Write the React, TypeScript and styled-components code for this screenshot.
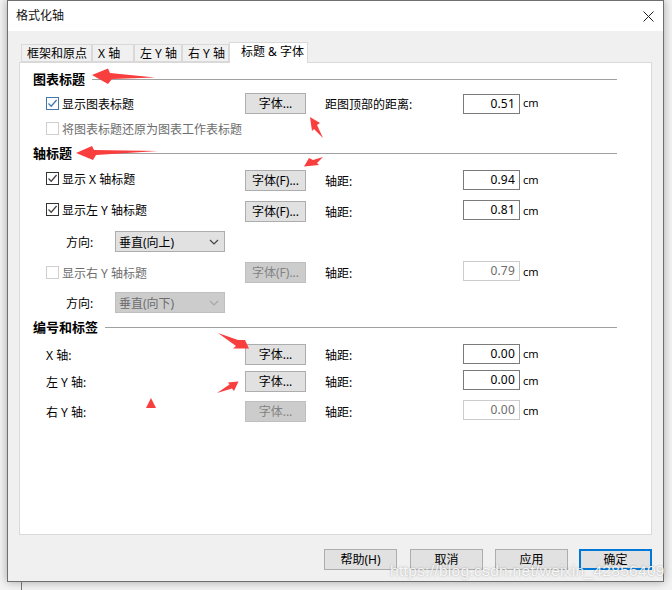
import React from "react";
import styled, { createGlobalStyle } from "styled-components";

const GlobalStyle = createGlobalStyle`
  html, body {
    margin: 0;
    padding: 0;
    background: #f3f3f3;
  }
  * {
    box-sizing: border-box;
  }
`;

const FONT = `"Noto Sans", "Noto Sans CJK SC", sans-serif`;

const Page = styled.div`
  position: relative;
  width: 672px;
  height: 590px;
  overflow: hidden;
  padding-left: 7px;
  font-family: ${FONT};
  font-size: 12px;
  color: #000;
`;

const Dialog = styled.div`
  width: 657px;
  height: 582px;
  border: 1px solid #6f6f6f;
  background: #f0f0f0;
  box-shadow: 0 0 9px rgba(0, 0, 0, 0.32);
`;

const BackEdge = styled.div`
  margin-left: 14px;
  height: 8px;
  border-left: 1px solid #707070;
`;

const TitleBar = styled.div`
  display: flex;
  align-items: center;
  justify-content: space-between;
  height: 30px;
  padding: 0 9px 0 8px;
  background: #fff;
`;

const Title = styled.span`
  line-height: 30px;
  color: #111;
`;

const Body = styled.div`
  padding: 11px 0 0 11px;
`;

const TabStrip = styled.div`
  display: flex;
  align-items: flex-end;
  height: 20px;
  padding-left: 2px;
`;

const Tab = styled.div<{ $width: number; $active?: boolean }>`
  position: relative;
  width: ${(p) => p.$width}px;
  height: ${(p) => (p.$active ? 21 : 18)}px;
  margin-bottom: ${(p) => (p.$active ? -1 : 0)}px;
  padding-left: ${(p) => (p.$active ? 11 : 5)}px;
  border: 1px solid #d9d9d9;
  border-bottom: ${(p) => (p.$active ? "none" : "1px solid #d9d9d9")};
  background: ${(p) => (p.$active ? "#fff" : "#f0f0f0")};
  line-height: 17px;
  white-space: nowrap;
  z-index: ${(p) => (p.$active ? 1 : 0)};
`;

const Panel = styled.div`
  width: 633px;
  height: 473px;
  padding: 7px 0 0 13px;
  border: 1px solid #d9d9d9;
  background: #fff;
`;

const Heading = styled.div<{ $top?: number }>`
  display: flex;
  align-items: center;
  gap: 7px;
  width: 584px;
  height: 18px;
  margin-top: ${(p) => p.$top ?? 0}px;
  font-size: 13px;
  font-weight: 700;
  line-height: 16px;
  white-space: nowrap;
`;

const HeadingLine = styled.div`
  flex: 1;
  height: 1px;
  margin-top: 1px;
  background: #a0a0a0;
`;

const Row = styled.div<{ $top: number }>`
  display: grid;
  grid-template-columns: 212px 61px 19px 138px 57px 3px auto;
  grid-template-rows: 21px;
  align-items: center;
  height: 21px;
  margin-top: ${(p) => p.$top}px;
  white-space: nowrap;
`;

const LeftCell = styled.div<{ $indent: number; $raise?: number }>`
  display: flex;
  align-items: center;
  padding-left: ${(p) => p.$indent}px;
  margin-bottom: ${(p) => p.$raise ?? 0}px;
`;

const Box = styled.span<{ $tone: "blue" | "dark" | "off" }>`
  display: flex;
  align-items: center;
  justify-content: center;
  width: 13px;
  height: 13px;
  margin-right: 3px;
  background: #fff;
  border: 1px solid
    ${(p) => (p.$tone === "blue" ? "#3f78ad" : p.$tone === "dark" ? "#333" : "#cfcfcf")};
  color: ${(p) => (p.$tone === "blue" ? "#3f78ad" : "#444")};
`;

const CheckText = styled.span<{ $off?: boolean }>`
  color: ${(p) => (p.$off ? "#6d6d6d" : "#000")};
`;

const FontButton = styled.button<{ $off?: boolean }>`
  grid-column: 2;
  width: 61px;
  height: 21px;
  padding: 0;
  border: 1px solid ${(p) => (p.$off ? "#bfbfbf" : "#adadad")};
  background: ${(p) => (p.$off ? "#cccccc" : "#e1e1e1")};
  color: ${(p) => (p.$off ? "#838383" : "#000")};
  font: inherit;
  line-height: 19px;
`;

const FieldLabel = styled.span`
  grid-column: 4;
`;

const Field = styled.input<{ $shift?: number }>`
  grid-column: 5;
  align-self: start;
  width: 57px;
  height: 20px;
  margin-top: ${(p) => p.$shift ?? 0}px;
  padding: 0 4px 1px 0;
  border: 1px solid ${(p) => (p.disabled ? "#cccccc" : "#7a7a7a")};
  background: #fff;
  color: ${(p) => (p.disabled ? "#6d6d6d" : "#000")};
  font: inherit;
  font-weight: 400;
  letter-spacing: 0.2px;
  text-align: right;
  outline: none;
`;

const Unit = styled.span`
  grid-column: 7;
  padding-bottom: 2px;
  font-size: 11px;
`;

const DirectionLabel = styled.span`
  width: 49px;
`;

const Select = styled.div<{ $off?: boolean }>`
  display: flex;
  align-items: center;
  justify-content: space-between;
  width: 110px;
  height: 21px;
  padding: 0 3px 0 3px;
  border: 1px solid ${(p) => (p.$off ? "#bfbfbf" : "#adadad")};
  background: ${(p) => (p.$off ? "#cccccc" : "#e1e1e1")};
  color: ${(p) => (p.$off ? "#6d6d6d" : "#000")};
`;

const Footer = styled.div`
  display: flex;
  justify-content: flex-end;
  width: 633px;
  padding-top: 14px;
`;

const FooterButton = styled.button<{ $gap?: number; $primary?: boolean }>`
  width: 73px;
  height: 21px;
  margin-left: ${(p) => p.$gap ?? 0}px;
  padding: 0;
  border: ${(p) => (p.$primary ? "2px solid #0078d7" : "1px solid #adadad")};
  background: #e1e1e1;
  color: #000;
  font: inherit;
  line-height: 18px;
`;

const Annotations = styled.svg`
  position: absolute;
  left: 0;
  top: 0;
  pointer-events: none;
`;

const Watermark = styled.div`
  position: absolute;
  left: 390px;
  top: 562px;
  font-family: "Liberation Sans", sans-serif;
  font-size: 15.5px;
  letter-spacing: 0.3px;
  line-height: 18px;
  white-space: nowrap;
  color: rgba(255, 255, 255, 0.88);
  text-shadow: 0 0 2px rgba(90, 90, 90, 0.5);
`;

const Check = () => (
  <svg width="11" height="11" viewBox="0 0 11 11" fill="none">
    <path d="M1.5 5.5 L4.2 8.2 L9.6 2" stroke="currentColor" strokeWidth="1.3" />
  </svg>
);

const Chevron = ({ color }: { color: string }) => (
  <svg width="10" height="6" viewBox="0 0 10 6" fill="none" style={{ marginRight: 2 }}>
    <path d="M1 1 L5 5 L9 1" stroke={color} strokeWidth="1.2" />
  </svg>
);

const CheckRow = ({
  tone,
  checked,
  off,
  raise,
  text,
}: {
  tone: "blue" | "dark" | "off";
  checked?: boolean;
  off?: boolean;
  raise?: number;
  text: string;
}) => (
  <LeftCell $indent={13} $raise={raise}>
    <Box $tone={tone}>{checked && <Check />}</Box>
    <CheckText $off={off}>{text}</CheckText>
  </LeftCell>
);

const Distance = ({ label, value, shift, off }: { label: string; value: string; shift?: number; off?: boolean }) => (
  <>
    <FieldLabel>{label}</FieldLabel>
    <Field value={value} readOnly disabled={off} $shift={shift} />
    <Unit>cm</Unit>
  </>
);

const arrows = [
  "92,75 108,68.5 110,73 155,77.5 112,79 108,84",
  "76,153 92,146 94,150 158,151 96,155 93,160",
  "310,117 320,123 317,125 323,138 314,129 312,131",
  "304,166.5 309,158 313,160 323,157 317,163 319,165",
  "218,333 238,340 245,340 249,348.5 233,348.5 236,346",
  "217,393 229.5,384.5 228,382.5 238.5,381.5 234,391 232,388.5",
  "151,398 156,408 146,408",
];

export default function App() {
  return (
    <>
      <GlobalStyle />
      <Page>
        <Dialog>
          <TitleBar>
            <Title>格式化轴</Title>
            <svg width="11" height="11" viewBox="0 0 11 11" fill="none">
              <path d="M0.5 0.5 L10.5 10.5 M10.5 0.5 L0.5 10.5" stroke="#222" strokeWidth="1" />
            </svg>
          </TitleBar>
          <Body>
            <TabStrip>
              <Tab $width={71}>框架和原点</Tab>
              <Tab $width={42}>X 轴</Tab>
              <Tab $width={48}>左 Y 轴</Tab>
              <Tab $width={47}>右 Y 轴</Tab>
              <Tab $width={79} $active>
                标题 &amp; 字体
              </Tab>
            </TabStrip>
            <Panel>
              <Heading>
                图表标题
                <HeadingLine />
              </Heading>
              <Row $top={5}>
                <CheckRow tone="blue" checked text="显示图表标题" />
                <FontButton>字体...</FontButton>
                <Distance label="距图顶部的距离:" value="0.51" shift={1} />
              </Row>
              <Row $top={4}>
                <CheckRow tone="off" off text="将图表标题还原为图表工作表标题" />
              </Row>
              <Heading $top={5}>
                轴标题
                <HeadingLine />
              </Heading>
              <Row $top={8}>
                <CheckRow tone="dark" checked raise={4} text="显示 X 轴标题" />
                <FontButton>字体(F)...</FontButton>
                <Distance label="轴距:" value="0.94" />
              </Row>
              <Row $top={10}>
                <CheckRow tone="dark" checked raise={4} text="显示左 Y 轴标题" />
                <FontButton>字体(F)...</FontButton>
                <Distance label="轴距:" value="0.81" shift={-1} />
              </Row>
              <Row $top={9}>
                <LeftCell $indent={33}>
                  <DirectionLabel>方向:</DirectionLabel>
                  <Select>
                    垂直(向上)
                    <Chevron color="#444" />
                  </Select>
                </LeftCell>
              </Row>
              <Row $top={10}>
                <CheckRow tone="off" off text="显示右 Y 轴标题" />
                <FontButton $off>字体(F)...</FontButton>
                <Distance label="轴距:" value="0.79" shift={-1} off />
              </Row>
              <Row $top={9}>
                <LeftCell $indent={33}>
                  <DirectionLabel>方向:</DirectionLabel>
                  <Select $off>
                    垂直(向下)
                    <Chevron color="#a8a8a8" />
                  </Select>
                </LeftCell>
              </Row>
              <Heading $top={5}>
                编号和标签
                <HeadingLine />
              </Heading>
              <Row $top={8}>
                <LeftCell $indent={13}>X 轴:</LeftCell>
                <FontButton>字体...</FontButton>
                <Distance label="轴距:" value="0.00" />
              </Row>
              <Row $top={6}>
                <LeftCell $indent={13}>左 Y 轴:</LeftCell>
                <FontButton>字体...</FontButton>
                <Distance label="轴距:" value="0.00" shift={-1} />
              </Row>
              <Row $top={9}>
                <LeftCell $indent={13}>右 Y 轴:</LeftCell>
                <FontButton $off>字体...</FontButton>
                <Distance label="轴距:" value="0.00" shift={-1} off />
              </Row>
            </Panel>
            <Footer>
              <FooterButton>帮助(H)</FooterButton>
              <FooterButton $gap={13}>取消</FooterButton>
              <FooterButton $gap={12}>应用</FooterButton>
              <FooterButton $gap={11} $primary>
                确定
              </FooterButton>
            </Footer>
          </Body>
        </Dialog>
        <BackEdge />
        <Annotations width="672" height="590" viewBox="0 0 672 590">
          {arrows.map((points) => (
            <polygon key={points} points={points} fill="#f93e3e" />
          ))}
        </Annotations>
        <Watermark>https://blog.csdn.net/weixin_42856409</Watermark>
      </Page>
    </>
  );
}
